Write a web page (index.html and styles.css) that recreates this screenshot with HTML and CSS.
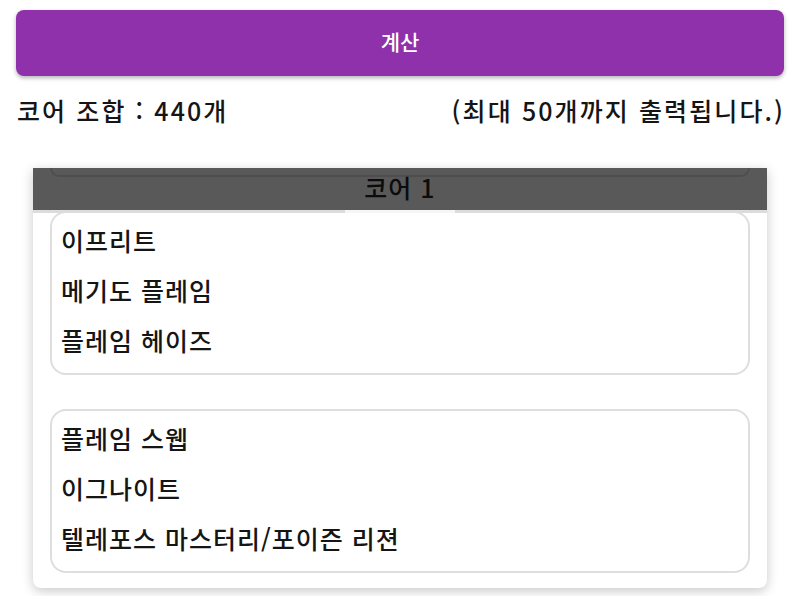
FILE: index.html
```html
<!DOCTYPE html>
<html lang="ko">
<head>
<meta charset="utf-8">
<link rel="stylesheet" href="styles.css">
</head>
<body>
<div class="page">
  <button class="calc">계산</button>
  <div class="summary">
    <span>코어 조합 : 440개</span>
    <span>(최대 50개까지 출력됩니다.)</span>
  </div>
  <div class="card">
    <div class="list">
      <div class="box prev"></div>
      <div class="box">
        <div class="item">이프리트</div>
        <div class="item">메기도 플레임</div>
        <div class="item">플레임 헤이즈</div>
      </div>
      <div class="box">
        <div class="item">플레임 스웹</div>
        <div class="item">이그나이트</div>
        <div class="item">텔레포스 마스터리/포이즌 리젼</div>
      </div>
    </div>
    <div class="head"><span>코어 1</span></div>
  </div>
</div>
</body>
</html>
```
FILE: styles.css
```css
html, body {
  margin: 0;
  padding: 0;
  background: #ffffff;
  font-family: "Noto Sans CJK KR", "Noto Sans", sans-serif;
  color: #1c1c1c;
  overflow: hidden;
}
.page {
  width: 800px;
  height: 596px;
  padding: 10px 16px 0;
  box-sizing: border-box;
}
.calc {
  display: block;
  width: 100%;
  height: 66px;
  border: none;
  border-radius: 8px;
  background: #8e31aa;
  color: #ffffff;
  font-family: inherit;
  font-size: 21px;
  font-weight: 500;
  box-shadow: 0 2px 4px rgba(0,0,0,0.3);
  padding: 0 0 4px;
}
.summary {
  display: flex;
  justify-content: space-between;
  align-items: center;
  height: 36px;
  margin-top: 16px;
  padding: 0 1px 0 1px;
  font-size: 25px;
  font-weight: 500;
  letter-spacing: 2.1px;
  color: #151515;
}
.summary span:last-child {
  margin-right: -2.1px;
}
.card {
  position: relative;
  margin: 40px 17px 0;
  height: 420px;
  background: #ffffff;
  border-radius: 0 0 8px 8px;
  box-shadow: 0 3px 12px rgba(0,0,0,0.22);
  overflow: hidden;
}
.list {
  display: flex;
  flex-direction: column;
  gap: 34px;
  padding: 0 17px;
}
.box {
  border: 2px solid #dedede;
  border-radius: 16px;
  height: 164px;
  box-sizing: border-box;
  padding: 5px 0 0 9px;
}
.box.prev {
  height: 9px;
  border-top: none;
  border-radius: 0 0 16px 16px;
  padding: 0;
}
.item {
  height: 50px;
  line-height: 44px;
  font-size: 25px;
  font-weight: 500;
  letter-spacing: 1px;
  color: #151515;
}
.head {
  position: absolute;
  left: 0;
  right: 0;
  top: 0;
  height: 42px;
  padding-bottom: 5px;
  box-sizing: border-box;
  background: rgba(0,0,0,0.65);
  display: flex;
  justify-content: center;
  align-items: center;
  font-size: 25px;
  font-weight: 500;
  letter-spacing: 1px;
  color: #0c0c0c;
}
.head::after {
  content: "";
  position: absolute;
  left: 0;
  right: 0;
  top: 42px;
  height: 3px;
  background: linear-gradient(to right, #dcdcdc 0, #dcdcdc 312px, #f6f6f6 312px, #f6f6f6 422px, #dcdcdc 422px);
}
```
